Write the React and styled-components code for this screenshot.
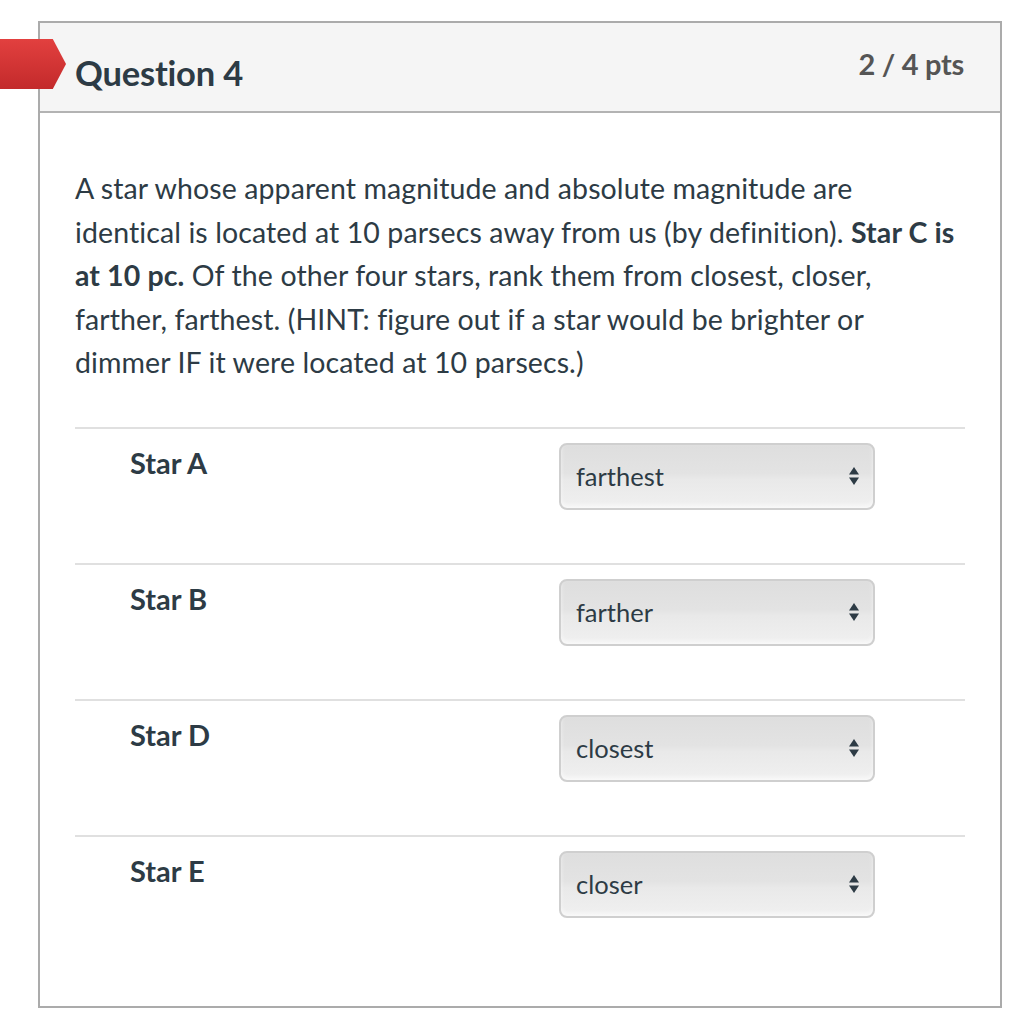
import React from 'react';
import styled, { createGlobalStyle } from 'styled-components';

const GlobalStyle = createGlobalStyle`
  body {
    margin: 0;
    background: #fff;
    font-family: Lato, "Open Sans", sans-serif;
    color: #2d3b45;
  }
`;

const rows = [
  { label: 'Star A', value: 'farthest' },
  { label: 'Star B', value: 'farther' },
  { label: 'Star D', value: 'closest' },
  { label: 'Star E', value: 'closer' },
];

const Page = styled.div`
  padding: 21px 0 16px 38px;
`;

const Card = styled.section`
  position: relative;
  width: 960px;
  border: 2px solid #ababab;
  background: #fff;
`;

const Flag = styled.div`
  position: absolute;
  left: -40px;
  top: 16px;
  width: 66px;
  height: 50px;
  background: linear-gradient(#e2403f, #c32a2b);
  clip-path: polygon(0 0, 80% 0, 100% 50%, 80% 100%, 0 100%);
`;

const Header = styled.header`
  display: flex;
  justify-content: space-between;
  align-items: flex-start;
  height: 88px;
  padding: 0 36px 0 35px;
  background: #f5f5f5;
  border-bottom: 2px solid #b3b3b3;
`;

const Title = styled.h2`
  margin: 30px 0 0;
  font-size: 34.5px;
  font-weight: 700;
  line-height: 40px;
  color: #2d3b45;
  letter-spacing: -0.2px;
`;

const Points = styled.div`
  margin-top: 23px;
  font-size: 29px;
  font-weight: 700;
  line-height: 36px;
  color: #555;
  letter-spacing: -0.3px;
`;

const Body = styled.div`
  padding: 54px 35px 35px;
`;

const Prompt = styled.p`
  margin: 0 0 42px;
  font-size: 28.5px;
  letter-spacing: 0.1px;
  line-height: 43.6px;
  color: #2d3b45;

  strong {
    font-weight: 700;
  }
`;

const Row = styled.div`
  display: flex;
  align-items: flex-start;
  box-sizing: border-box;
  height: 136px;
  padding-top: 14px;
  border-top: 2px solid #e0e0e0;
`;

const Label = styled.div`
  width: 429px;
  padding-left: 55px;
  font-size: 29px;
  font-weight: 700;
  line-height: 40px;
  color: #2d3b45;
`;

const Select = styled.div`
  display: flex;
  align-items: center;
  justify-content: space-between;
  box-sizing: border-box;
  width: 316px;
  height: 67px;
  padding: 0 13px 0 15px;
  border: 2px solid #cfcfcf;
  border-radius: 8px;
  background: linear-gradient(#dedede 0%, #e3e3e3 45%, #e9e9e9 55%, #f0f0f0 100%);
  box-shadow: inset 0 -3px 4px rgba(255, 255, 255, 0.6);
  font-size: 25.5px;
  color: #2d3b45;
`;

const Arrows = () => (
  <svg width="12" height="20" viewBox="0 0 12 20">
    <path d="M6 1 L11 8.5 L1 8.5 Z" fill="#2d3b45" />
    <path d="M1 11.5 L11 11.5 L6 19 Z" fill="#2d3b45" />
  </svg>
);

export default function App() {
  return (
    <Page>
      <GlobalStyle />
      <Card>
        <Flag />
        <Header>
          <Title>Question 4</Title>
          <Points>2 / 4 pts</Points>
        </Header>
        <Body>
          <Prompt>
            A star whose apparent magnitude and absolute magnitude are identical is
            located at 10 parsecs away from us (by definition). <strong>Star C is at 10 pc.</strong>{' '}
            Of the other four stars, rank them from closest, closer, farther, farthest.
            (HINT: figure out if a star would be brighter or dimmer IF it were located
            at 10 parsecs.)
          </Prompt>
          {rows.map((row) => (
            <Row key={row.label}>
              <Label>{row.label}</Label>
              <Select>
                <span>{row.value}</span>
                <Arrows />
              </Select>
            </Row>
          ))}
        </Body>
      </Card>
    </Page>
  );
}
